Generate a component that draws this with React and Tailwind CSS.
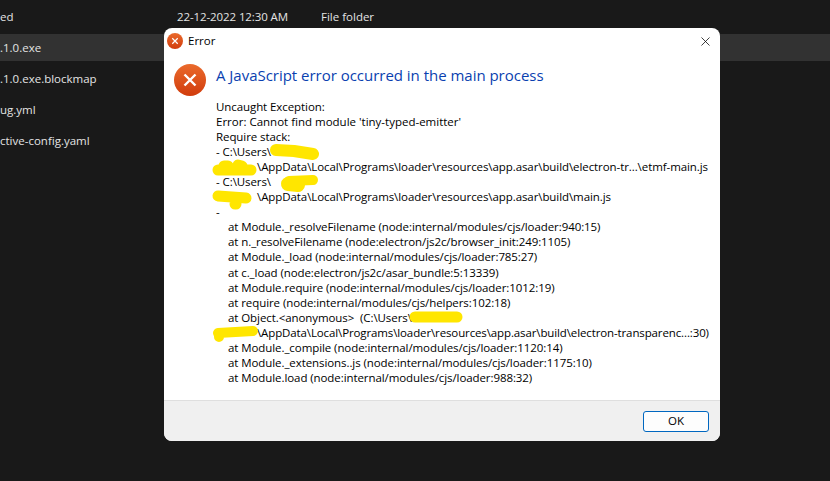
import { X } from "lucide-react";

const files = [
  { name: "ed", date: "22-12-2022 12:30 AM", type: "File folder" },
  { name: ".1.0.exe", active: true },
  { name: ".1.0.exe.blockmap" },
  { name: "ug.yml" },
  { name: "ctive-config.yaml" },
];

const lines = [
  { text: "Uncaught Exception:" },
  { text: "Error: Cannot find module 'tiny-typed-emitter'", pad: "tracking-normal" },
  { text: "Require stack:" },
  { text: "- C:\\Users\\" },
  { text: "\\AppData\\Local\\Programs\\loader\\resources\\app.asar\\build\\electron-tr...\\etmf-main.js", pad: "pl-[41px]" },
  { text: "- C:\\Users\\" },
  { text: "\\AppData\\Local\\Programs\\loader\\resources\\app.asar\\build\\main.js", pad: "pl-[41px]" },
  { text: "-" },
  { text: "at Module._resolveFilename (node:internal/modules/cjs/loader:940:15)", pad: "pl-3" },
  { text: "at n._resolveFilename (node:electron/js2c/browser_init:249:1105)", pad: "pl-3" },
  { text: "at Module._load (node:internal/modules/cjs/loader:785:27)", pad: "pl-3" },
  { text: "at c._load (node:electron/js2c/asar_bundle:5:13339)", pad: "pl-3" },
  { text: "at Module.require (node:internal/modules/cjs/loader:1012:19)", pad: "pl-3" },
  { text: "at require (node:internal/modules/cjs/helpers:102:18)", pad: "pl-3" },
  { text: "at Object.<anonymous>  (C:\\Users\\", pad: "pl-3" },
  { text: "\\AppData\\Local\\Programs\\loader\\resources\\app.asar\\build\\electron-transparenc...:30)", pad: "pl-[41px] tracking-[-0.12px]" },
  { text: "at Module._compile (node:internal/modules/cjs/loader:1120:14)", pad: "pl-3" },
  { text: "at Module._extensions..js (node:internal/modules/cjs/loader:1175:10)", pad: "pl-3" },
  { text: "at Module.load (node:internal/modules/cjs/loader:988:32)", pad: "pl-3" },
];

function ErrorIcon({ size }) {
  return (
    <svg width={size} height={size} viewBox="0 0 32 32" className="shrink-0">
      <defs>
        <linearGradient id={`err${size}`} x1="0" y1="0" x2="0" y2="1">
          <stop offset="0" stopColor="#ea6a2c" />
          <stop offset="1" stopColor="#d13c0c" />
        </linearGradient>
      </defs>
      <circle cx="16" cy="16" r="16" fill={`url(#err${size})`} />
      <path d="M10.5 10.5l11 11M21.5 10.5l-11 11" stroke="#fff" strokeWidth="2.4" fill="none" />
    </svg>
  );
}

// yellow marker strokes over the user name, page coordinates
function Scribbles() {
  return (
    <svg width="830" height="481" viewBox="0 0 830 481" className="pointer-events-none absolute left-0 top-0">
      <g fill="none" stroke="#ffe600" strokeLinecap="round" strokeLinejoin="round">
        <path d="M276 150l18 1 19 3" strokeWidth="12" />
        <path d="M218 170l33 0M224 166l4 0M238 165l4 1" strokeWidth="11" />
        <path d="M289 181l24-1" strokeWidth="10" />
        <path d="M288 184l10 1" strokeWidth="14" />
        <path d="M218 196l28 2M235 204l1 0" strokeWidth="11" />
        <path d="M415 317l42 0" strokeWidth="11" />
        <path d="M218 333l35-2M219 336l0 1" strokeWidth="10" />
      </g>
    </svg>
  );
}

export default function App() {
  return (
    <div className="relative h-[481px] w-[830px] overflow-hidden bg-[#191919] font-['Open_Sans',sans-serif] text-[11.5px] text-[#e4e4e4]">
      <div className="flex flex-col pt-[1px]">
        {files.map((f) => (
          <div key={f.name} className={`my-[2px] flex h-[27px] items-center ${f.active ? "bg-[#323232]" : ""}`}>
            <span className="w-[177px]">{f.name}</span>
            {f.date && <span className="w-[144px] tracking-[-0.1px]">{f.date}</span>}
            {f.type && <span>{f.type}</span>}
          </div>
        ))}
      </div>

      <div className="absolute left-[164px] top-[28px] flex h-[413px] w-[556px] flex-col overflow-hidden rounded-lg bg-white text-black">
        <div className="flex h-[26px] shrink-0 items-center pl-[3px]">
          <ErrorIcon size={16} />
          <span className="ml-[5px] flex-1 text-black">Error</span>
          <X size={15} strokeWidth={1.2} className="mr-[7px]" />
        </div>
        <div className="flex flex-1 pl-[10px] pt-[10px]">
          <ErrorIcon size={32} />
          <div className="ml-[10px] min-w-0 flex-1">
            <h1 className="text-[15px] leading-[22px] font-normal tracking-[-0.02px] text-[#0a3fb0]">
              A JavaScript error occurred in the main process
            </h1>
            <div className="mt-[13px] tracking-[-0.08px]">
              {lines.map((l, i) => (
                <div key={i} className={`h-[15.05px] whitespace-pre leading-[15.05px] ${l.pad ?? ""}`}>
                  {l.text}
                </div>
              ))}
            </div>
          </div>
        </div>
        <div className="flex h-[41px] shrink-0 items-center justify-end border-t border-[#dfdfdf] bg-[#f0f0f0] pr-[11px]">
          <button className="h-[21px] w-[66px] rounded-[3px] border border-[#0067c0] bg-[#fdfdfd] leading-none text-black">
            OK
          </button>
        </div>
      </div>

      <Scribbles />
    </div>
  );
}
